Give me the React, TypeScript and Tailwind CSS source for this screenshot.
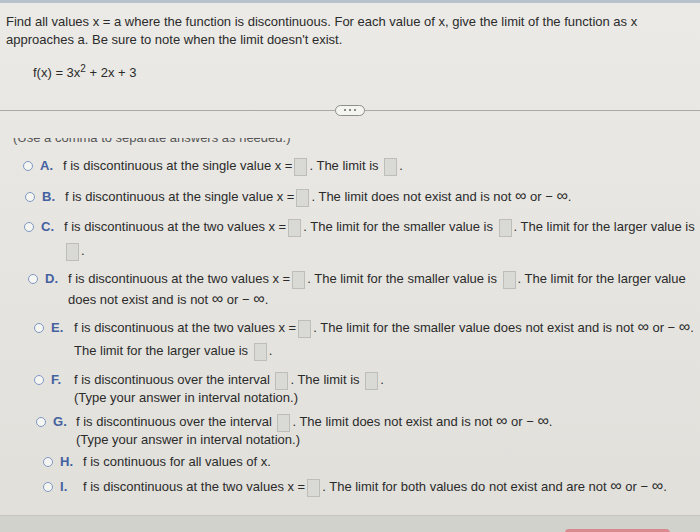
import React from 'react'

/* answer input box */
const Box = () => (
  <span className="mx-[2px] inline-block h-[18px] w-[13px] border border-[#bdbdb9] bg-[#d9d9d6] align-middle" />
)

const Inf = () => <span className="text-[16px] leading-none">∞</span>

interface Line {
  cls: string
  content: React.ReactNode
}

interface Choice {
  letter: string
  row: string
  first: string
  lines: Line[]
}

const L22 = 'h-[22px] leading-[22px]'
const L18 = 'h-[18px] leading-[18px]'

const notInf = (
  <>
    is not <Inf /> or − <Inf />.
  </>
)

const choices: Choice[] = [
  {
    letter: 'A',
    row: 'mt-[9px] pl-[23px]',
    first: L22,
    lines: [{ cls: L22, content: <>f is discontinuous at the single value x =<Box />. The limit is <Box />.</> }],
  },
  {
    letter: 'B',
    row: 'mt-[9px] pl-[25px]',
    first: L22,
    lines: [{ cls: L22, content: <>f is discontinuous at the single value x =<Box />. The limit does not exist and {notInf}</> }],
  },
  {
    letter: 'C',
    row: 'mt-[8px] pl-[24px]',
    first: L22,
    lines: [
      {
        cls: L22,
        content: (
          <>f is discontinuous at the two values x =<Box />. The limit for the smaller value is <Box />. The limit for the larger value is</>
        ),
      },
      { cls: 'mt-[2px] h-[22px] leading-[22px]', content: <><Box />.</> },
    ],
  },
  {
    letter: 'D',
    row: 'mt-[6px] pl-[28px]',
    first: L22,
    lines: [
      {
        cls: L22,
        content: <>f is discontinuous at the two values x =<Box />. The limit for the smaller value is <Box />. The limit for the larger value</>,
      },
      { cls: 'mt-[1px] h-[18px] leading-[18px]', content: <>does not exist and {notInf}</> },
    ],
  },
  {
    letter: 'E',
    row: 'mt-[8px] pl-[34px]',
    first: L22,
    lines: [
      {
        cls: L22,
        content: <>f is discontinuous at the two values x =<Box />. The limit for the smaller value does not exist and {notInf}</>,
      },
      { cls: 'mt-[1px] h-[22px] leading-[22px]', content: <>The limit for the larger value is <Box />.</> },
    ],
  },
  {
    letter: 'F',
    row: 'mt-[9px] pl-[34px]',
    first: L18,
    lines: [
      { cls: L18, content: <>f is discontinuous over the interval <Box />. The limit is <Box />.</> },
      { cls: L18, content: <>(Type your answer in interval notation.)</> },
    ],
  },
  {
    letter: 'G',
    row: 'mt-[6px] pl-[36px]',
    first: L18,
    lines: [
      { cls: L18, content: <>f is discontinuous over the interval <Box />. The limit does not exist and {notInf}</> },
      { cls: L18, content: <>(Type your answer in interval notation.)</> },
    ],
  },
  {
    letter: 'H',
    row: 'mt-[4px] pl-[43px]',
    first: L18,
    lines: [{ cls: L18, content: <>f is continuous for all values of x.</> }],
  },
  {
    letter: 'I',
    row: 'mt-[7px] pl-[43px]',
    first: L18,
    lines: [
      {
        cls: L18,
        content: <>f is discontinuous at the two values x =<Box />. The limit for both values do not exist and are not <Inf /> or − <Inf />.</>,
      },
    ],
  },
]

const ChoiceRow = ({ c }: { c: Choice }) => (
  <div className={`flex ${c.row}`}>
    <div className={`flex w-[10px] items-center ${c.first}`}>
      <span className="h-[10px] w-[10px] rounded-full border-[1.5px] border-[#7f98c4] bg-[#f5f5f2]" />
    </div>
    <div className={`ml-[7px] w-[23px] font-bold text-[#4461a0] ${c.first}`}>{c.letter}.</div>
    <div className="whitespace-nowrap">
      {c.lines.map((l, i) => (
        <div key={i} className={l.cls}>
          {l.content}
        </div>
      ))}
    </div>
  </div>
)

const App = () => {
  return (
    <div className="h-[532px] w-[700px] overflow-hidden bg-linear-to-b from-[#ebeae6] to-[#e0dfda] font-['Liberation_Sans',Arial,sans-serif] text-[13px] text-[#2b2b2b]">
      <div className="h-[3px] bg-[#b7c2cc]" />

      {/* question */}
      <div className="w-[690px] pl-[6px] pt-[10px] leading-[18px]">
        <p>
          Find all values x = a where the function is discontinuous. For each value of x, give the limit of the function as x
          approaches a. Be sure to note when the limit doesn't exist.
        </p>
      </div>
      <div className="mt-[15px] pl-[33px] leading-[18px]">
        f(x) = 3x<sup className="text-[10px]">2</sup> + 2x + 3
      </div>

      {/* divider */}
      <div className="mt-[22px] flex h-[12px] items-center">
        <div className="h-px flex-1 bg-[#a9a9a5]" />
        <div className="flex h-[11px] w-[30px] items-center justify-center gap-[3px] rounded-full border border-[#8e8e8a] bg-[#f4f4f1]">
          <span className="h-[2px] w-[2px] rounded-full bg-[#666]" />
          <span className="h-[2px] w-[2px] rounded-full bg-[#666]" />
          <span className="h-[2px] w-[2px] rounded-full bg-[#666]" />
        </div>
        <div className="h-px flex-1 bg-[#a9a9a5]" />
      </div>

      {/* scrolled instruction, mostly hidden */}
      <div className="mt-[22px] h-[8px] overflow-hidden pl-[13px]">
        <p className="-mt-[8px] leading-[16px] text-[#555]">(Use a comma to separate answers as needed.)</p>
      </div>

      {choices.map((c) => (
        <ChoiceRow key={c.letter} c={c} />
      ))}

      <div className="mt-[19px] flex h-[17px] justify-end border-t border-[#c6c6c1] bg-[#d2d2cd] pr-[30px]">
        <div className="mt-[13px] h-[8px] w-[105px] rounded-t-[4px] bg-[#d98a8f]" />
      </div>
    </div>
  )
}

export default App
